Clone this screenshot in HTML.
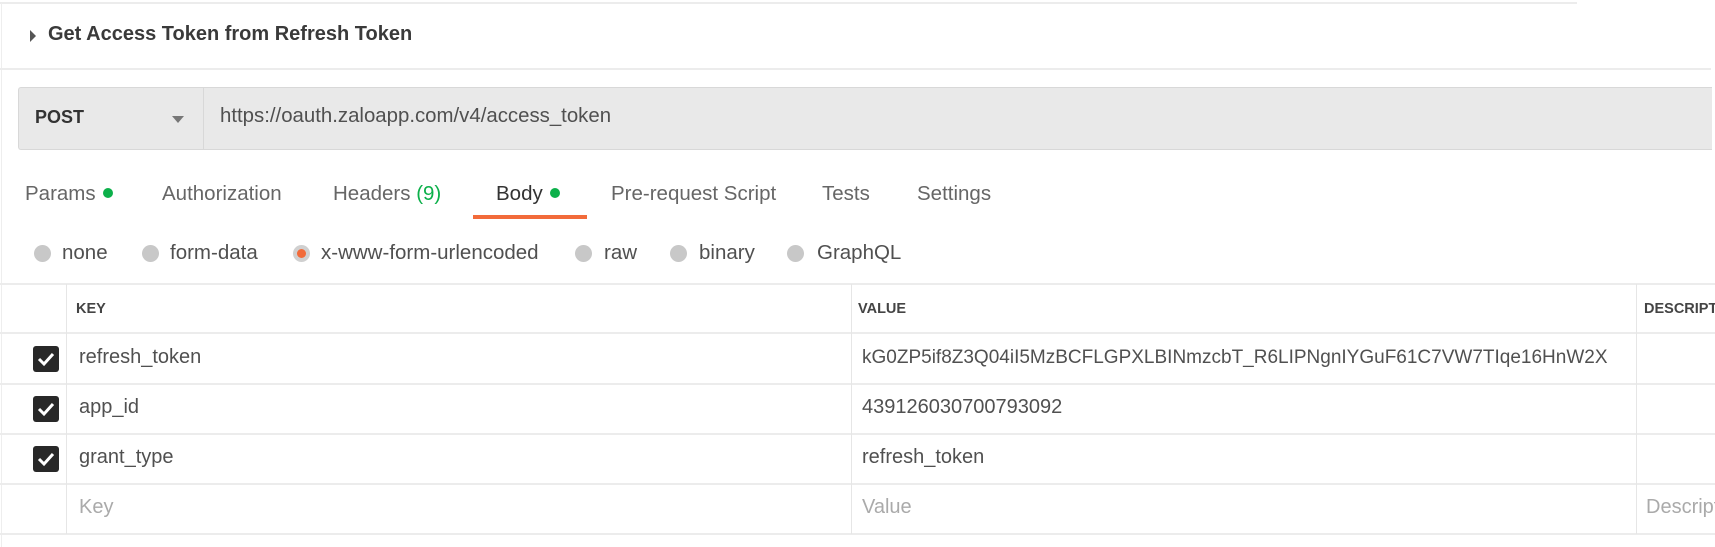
<!DOCTYPE html>
<html><head><style>
body{margin:0;width:1715px;height:547px;background:#fff;position:relative;overflow:hidden;font-family:"Liberation Sans",sans-serif;color:#505050}
.a{position:absolute;white-space:nowrap}
.hl{position:absolute;height:2px;background:#ececec}
.vl{position:absolute;width:1px;background:#e6e6e6}
.dot{display:inline-block;width:10px;height:10px;border-radius:50%;background:#0cb04a;margin-left:7px;vertical-align:2px}
.rad{position:absolute;width:17px;height:17px;border-radius:50%;background:#c8c8c8;top:245px}
.rt{top:241px;font-size:20.5px;color:#505050}
.cb{position:absolute;left:33px;width:26px;height:26px;background:#282828;border-radius:3px}
.cb svg{position:absolute;left:4px;top:5px}
.tx{font-size:20px;color:#505050}
.tb{font-size:20.5px;top:182px}
</style></head><body>
<div class="hl" style="left:0;top:2px;width:1577px"></div>
<div class="vl" style="left:1px;top:3px;height:544px;background:#eee"></div>
<svg class="a" style="left:29px;top:30px" width="8" height="12"><path d="M1 0L7 6L1 12Z" fill="#555"/></svg>
<div class="a" style="left:48px;top:23px;font-size:20px;font-weight:bold;color:#3a3a3a">Get Access Token from Refresh Token</div>
<div class="hl" style="left:0;top:68px;width:1711px"></div>
<div class="a" style="left:18px;top:87px;width:1693px;height:61px;background:#e9e9e9;border:1px solid #d8d8d8;border-right:none;border-radius:3px 0 0 3px"></div>
<div class="vl" style="left:203px;top:88px;height:61px;background:#d8d8d8"></div>
<div class="a" style="left:35px;top:107px;font-size:18px;font-weight:bold;color:#333">POST</div>
<svg class="a" style="left:172px;top:116px" width="12" height="7"><path d="M0 0H12L6 7Z" fill="#777"/></svg>
<div class="a" style="left:220px;top:105px;font-size:20.4px;color:#505050">https://oauth.zaloapp.com/v4/access_token</div>
<div class="a tb" style="left:25px;color:#666">Params<span class="dot"></span></div>
<div class="a tb" style="left:162px;color:#666">Authorization</div>
<div class="a tb" style="left:333px;color:#666">Headers <span style="color:#0cb04a">(9)</span></div>
<div class="a tb" style="left:496px;color:#333">Body<span class="dot"></span></div>
<div class="a tb" style="left:611px;color:#666">Pre-request Script</div>
<div class="a tb" style="left:822px;color:#666">Tests</div>
<div class="a tb" style="left:917px;color:#666">Settings</div>
<div class="a" style="left:473px;top:215px;width:114px;height:4px;background:#f26b3a"></div>
<div class="rad" style="left:34px"></div><div class="a rt" style="left:62px">none</div>
<div class="rad" style="left:142px"></div><div class="a rt" style="left:170px">form-data</div>
<div class="rad" style="left:293px;background:#d0d0d0"><div style="position:absolute;left:4px;top:4px;width:9px;height:9px;border-radius:50%;background:#f26b3a"></div></div><div class="a rt" style="left:321px">x-www-form-urlencoded</div>
<div class="rad" style="left:575px"></div><div class="a rt" style="left:604px">raw</div>
<div class="rad" style="left:670px"></div><div class="a rt" style="left:699px">binary</div>
<div class="rad" style="left:787px"></div><div class="a rt" style="left:817px">GraphQL</div>
<div class="hl" style="left:0;top:283px;width:1715px"></div>
<div class="hl" style="left:0;top:332px;width:1715px"></div>
<div class="hl" style="left:0;top:383px;width:1715px"></div>
<div class="hl" style="left:0;top:433px;width:1715px"></div>
<div class="hl" style="left:0;top:483px;width:1715px"></div>
<div class="hl" style="left:0;top:533px;width:1715px"></div>
<div class="vl" style="left:66px;top:284px;height:250px"></div>
<div class="vl" style="left:851px;top:284px;height:250px"></div>
<div class="vl" style="left:1636px;top:284px;height:250px"></div>
<div class="a" style="left:76px;top:301px;font-size:14.5px;font-weight:bold;color:#444">KEY</div>
<div class="a" style="left:858px;top:301px;font-size:14.5px;font-weight:bold;color:#444">VALUE</div>
<div class="a" style="left:1644px;top:301px;font-size:14.5px;font-weight:bold;color:#444">DESCRIPTION</div>
<div class="cb" style="top:346px"><svg width="18" height="16"><path d="M2 8L7 13L16 3" stroke="#fff" stroke-width="3" fill="none"/></svg></div>
<div class="cb" style="top:396px"><svg width="18" height="16"><path d="M2 8L7 13L16 3" stroke="#fff" stroke-width="3" fill="none"/></svg></div>
<div class="cb" style="top:446px"><svg width="18" height="16"><path d="M2 8L7 13L16 3" stroke="#fff" stroke-width="3" fill="none"/></svg></div>
<div class="a tx" style="left:79px;top:346px">refresh_token</div>
<div class="a tx" style="left:79px;top:396px">app_id</div>
<div class="a tx" style="left:79px;top:446px">grant_type</div>
<div class="a tx" style="left:79px;top:496px;color:#aaa">Key</div>
<div class="a tx" style="left:862px;top:347px;font-size:19px">kG0ZP5if8Z3Q04iI5MzBCFLGPXLBINmzcbT_R6LIPNgnIYGuF61C7VW7TIqe16HnW2X</div>
<div class="a tx" style="left:862px;top:396px">439126030700793092</div>
<div class="a tx" style="left:862px;top:446px">refresh_token</div>
<div class="a tx" style="left:862px;top:496px;color:#aaa">Value</div>
<div class="a tx" style="left:1646px;top:496px;color:#aaa">Description</div>
</body></html>
